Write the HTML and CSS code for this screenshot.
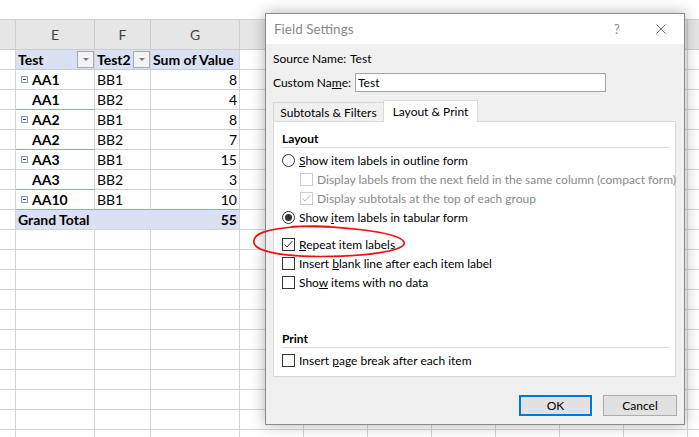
FILE: index.html
```html
<!DOCTYPE html>
<html>
<head>
<meta charset="utf-8">
<title>Field Settings</title>
<link rel="stylesheet" href="styles.css">
</head>
<body>
<div class="sheet">
  <div class="strip"></div>
  <div class="ch"></div><div class="ch">E</div><div class="ch">F</div><div class="ch">G</div><div class="ch rest"></div>

  <div class="c"></div>
  <div class="c ph"><span>Test</span><span class="dd"></span></div>
  <div class="c ph"><span>Test2</span><span class="dd"></span></div>
  <div class="c ph">Sum of Value</div>
  <div class="c rest"></div>

  <div class="c"></div>
  <div class="c e b"><span class="tog"></span>AA1</div>
  <div class="c">BB1</div>
  <div class="c num">8</div>
  <div class="c rest"></div>

  <div class="c"></div>
  <div class="c e ind b bb">AA1</div>
  <div class="c">BB2</div>
  <div class="c num">4</div>
  <div class="c rest"></div>

  <div class="c"></div>
  <div class="c e b"><span class="tog"></span>AA2</div>
  <div class="c">BB1</div>
  <div class="c num">8</div>
  <div class="c rest"></div>

  <div class="c"></div>
  <div class="c e ind b bb">AA2</div>
  <div class="c">BB2</div>
  <div class="c num">7</div>
  <div class="c rest"></div>

  <div class="c"></div>
  <div class="c e b"><span class="tog"></span>AA3</div>
  <div class="c">BB1</div>
  <div class="c num">15</div>
  <div class="c rest"></div>

  <div class="c"></div>
  <div class="c e ind b bb">AA3</div>
  <div class="c">BB2</div>
  <div class="c num">3</div>
  <div class="c rest"></div>

  <div class="c"></div>
  <div class="c e b bb"><span class="tog"></span>AA10</div>
  <div class="c bb">BB1</div>
  <div class="c num bb">10</div>
  <div class="c rest"></div>

  <div class="c"></div>
  <div class="c gt nr">Grand Total</div>
  <div class="c gt nr"></div>
  <div class="c gt num">55</div>
  <div class="c rest"></div>

  <div class="c"></div><div class="c"></div><div class="c"></div><div class="c"></div><div class="c rest"></div>
  <div class="c"></div><div class="c"></div><div class="c"></div><div class="c"></div><div class="c rest"></div>
  <div class="c"></div><div class="c"></div><div class="c"></div><div class="c"></div><div class="c rest"></div>
  <div class="c"></div><div class="c"></div><div class="c"></div><div class="c"></div><div class="c rest"></div>
  <div class="c"></div><div class="c"></div><div class="c"></div><div class="c"></div><div class="c rest"></div>
  <div class="c"></div><div class="c"></div><div class="c"></div><div class="c"></div><div class="c rest"></div>
  <div class="c"></div><div class="c"></div><div class="c"></div><div class="c"></div><div class="c rest"></div>
  <div class="c"></div><div class="c"></div><div class="c"></div><div class="c"></div><div class="c rest"></div>
  <div class="c"></div><div class="c"></div><div class="c"></div><div class="c"></div><div class="c rest"></div>
  <div class="c"></div><div class="c"></div><div class="c"></div><div class="c"></div><div class="c rest"></div>
  <div class="c"></div><div class="c"></div><div class="c"></div><div class="c"></div><div class="c rest"></div>
</div>

<div class="dialog">
  <div class="titlebar">
    <span class="title">Field Settings</span>
    <span class="help">?</span>
    <svg class="close" width="10" height="10" viewBox="0 0 10 10"><path d="M0.5 0.5 L9.5 9.5 M9.5 0.5 L0.5 9.5" stroke="#6b6b6b" stroke-width="1" fill="none"/></svg>
  </div>
  <div class="dbody">
    <div class="src"><span class="lbl1">Source Name:</span><span>Test</span></div>
    <div class="cname"><span class="lbl2">Custom Na<u>m</u>e:</span><div class="tbox">Test</div></div>
    <div class="tabs">
      <div class="tab">Subtotals &amp; Filters</div>
      <div class="tab active">Layout &amp; Print</div>
    </div>
    <div class="panel">
      <div class="sect">Layout</div>
      <div class="opt first"><span class="radio"></span><span><u>S</u>how item labels in outline form</span></div>
      <div class="opt sub dis"><span class="cb"></span><span>Display labels from the next field in the same column (compact form)</span></div>
      <div class="opt sub dis"><span class="cb"><svg width="11" height="11" viewBox="0 0 11 11"><path d="M1.5 5.5 L4 8 L9.5 2" stroke="#b5b5b5" stroke-width="1" fill="none"/></svg></span><span>Display subtotals at the top of each group</span></div>
      <div class="opt"><span class="radio on"></span><span>Show <u>i</u>tem labels in tabular form</span></div>
      <div class="opt gap"><span class="cb"><svg width="11" height="11" viewBox="0 0 11 11"><path d="M1.5 5.5 L4 8 L9.5 2" stroke="#333" stroke-width="1" fill="none"/></svg></span><span><u>R</u>epeat item labels</span></div>
      <div class="opt"><span class="cb"></span><span>Insert <u>b</u>lank line after each item label</span></div>
      <div class="opt"><span class="cb"></span><span>Sho<u>w</u> items with no data</span></div>
      <div class="sect print">Print</div>
      <div class="opt first"><span class="cb"></span><span>Insert <u>p</u>age break after each item</span></div>
    </div>
    <div class="buttons">
      <button class="btn default">OK</button>
      <button class="btn">Cancel</button>
    </div>
  </div>
</div>

<svg class="annot" width="699" height="437" viewBox="0 0 699 437">
  <path d="M292 226.5 C335 225.5 398 231 404 242 C408 251 365 256.5 320 256.5 C285 256.5 256 252 254 243 C252 234 266 228.5 300 226.5 C312 226 322 226 330 226.5" fill="none" stroke="#f01010" stroke-width="1.7" stroke-linecap="round"/>
</svg>
</body>
</html>
```

FILE: styles.css
```css
* { box-sizing: border-box; }
html, body { margin: 0; padding: 0; }
body {
  width: 699px;
  height: 437px;
  overflow: hidden;
  position: relative;
  background: #fff;
  font-family: "Lato", "Liberation Sans", sans-serif;
}

/* ---------- spreadsheet ---------- */
.sheet {
  display: grid;
  grid-template-columns: 16px 79px 56px 89px 1fr;
  grid-template-rows: 20px 30px;
  grid-auto-rows: 20px;
  font-size: 14px;
  color: #000;
}
.strip { grid-column: 1 / -1; border-bottom: 1px solid #d0d0d0; }
.ch {
  background: #e6e6e6;
  border-right: 1px solid #cdcdcd;
  border-bottom: 1px solid #cdcdcd;
  color: #444;
  display: flex;
  align-items: center;
  justify-content: center;
  font-size: 14px;
}
.ch.rest {
  border-right: none;
  background: #e6e6e6 repeating-linear-gradient(to right, transparent 0 63px, #cdcdcd 63px 64px);
}
.c {
  border-right: 1px solid #d4d4d4;
  border-bottom: 1px solid #d4d4d4;
  display: flex;
  align-items: center;
  padding: 0 2px;
  white-space: nowrap;
}
.c.rest {
  border-right: none;
  background: repeating-linear-gradient(to right, transparent 0 63px, #d4d4d4 63px 64px);
}
.ph {
  background: #d9e1f2;
  font-weight: bold;
  justify-content: space-between;
  border-bottom-color: #bfcbe0;
}
.dd {
  width: 17px;
  height: 17px;
  margin-right: -2px;
  border: 1px solid #a9a9a9;
  background: #f3f3f3;
  display: flex;
  align-items: center;
  justify-content: center;
}
.dd::after {
  content: "";
  border-left: 3px solid transparent;
  border-right: 3px solid transparent;
  border-top: 3px solid #7a7a7a;
}
.b { font-weight: bold; }
.e { padding-left: 5px; }
.e.ind { padding-left: 16px; }
.tog {
  width: 7px;
  height: 7px;
  margin-right: 4px;
  border: 1px solid #8496b0;
  background: #fff linear-gradient(#333, #333) no-repeat center / 3px 1px;
}
.num { justify-content: flex-end; }
.bb { border-bottom-color: #8ea9db; }
.gt { background: #d9e1f2; font-weight: bold; }
.gt.nr { border-right-color: #d9e1f2; }

/* ---------- dialog ---------- */
.dialog {
  position: absolute;
  left: 265px;
  top: 13px;
  width: 420px;
  height: 412px;
  border: 1px solid #8a8a8a;
  background: #f0f0f0;
  box-shadow: 0 0 14px rgba(0, 0, 0, 0.3);
  font-family: "Lato", "Liberation Sans", sans-serif;
  font-size: 12px;
  color: #000;
  display: flex;
  flex-direction: column;
  white-space: nowrap;
}
.titlebar {
  height: 30px;
  background: #fff;
  display: flex;
  align-items: center;
  padding: 0 18px 0 8px;
}
.title { flex: 1; color: #8a8a8a; font-size: 13.5px; }
.help { color: #8a8a8a; width: 10px; text-align: center; margin-right: 34px; font-size: 13px; }
.close { display: block; }

.dbody {
  flex: 1;
  padding: 4px 8px 0 7px;
  display: flex;
  flex-direction: column;
}
.src, .cname { height: 20px; display: flex; align-items: center; }
.cname { margin-top: 4px; }
.lbl1 { width: 77px; flex: none; }
.lbl2 { width: 82px; flex: none; }
.tbox {
  width: 251px;
  height: 19px;
  border: 1px solid #a5a5a5;
  background: #fff;
  padding-left: 2px;
  display: flex;
  align-items: center;
}

.tabs {
  margin-top: 8px;
  height: 22px;
  margin-bottom: -1px;
  display: flex;
  align-items: flex-end;
  position: relative;
  z-index: 1;
}
.tab {
  width: 111px;
  height: 19px;
  margin-bottom: 1px;
  border: 1px solid #d9d9d9;
  border-bottom: none;
  display: flex;
  align-items: center;
  justify-content: center;
}
.tab.active {
  width: 95px;
  height: 22px;
  margin-bottom: 0;
  margin-left: -1px;
  background: #fff;
  padding-bottom: 1px;
}
.panel {
  height: 256px;
  background: #fff;
  border: 1px solid #d9d9d9;
  padding: 7px 6px 0 8px;
}
.sect {
  height: 19px;
  border-bottom: 1px solid #dcdcdc;
  font-weight: bold;
  display: flex;
  align-items: center;
}
.sect.print { margin-top: 37px; }
.opt { height: 19px; display: flex; align-items: center; }
.opt.first { margin-top: 3px; }
.opt.gap { margin-top: 8px; }
.opt.sub { padding-left: 18px; }
.opt.dis { color: #8a8a8a; }
.radio, .cb {
  width: 13px;
  height: 13px;
  margin-right: 4px;
  border: 1px solid #333;
  background: #fff;
  flex: none;
  display: flex;
  align-items: center;
  justify-content: center;
}
.radio { border-radius: 50%; }
.radio.on::after {
  content: "";
  width: 7px;
  height: 7px;
  border-radius: 50%;
  background: #333;
}
.dis .cb { border-color: #cccccc; }
.cb svg { display: block; }

.buttons {
  margin-top: 18px;
  margin-right: -1px;
  display: flex;
  justify-content: flex-end;
  gap: 11px;
}
.btn {
  width: 74px;
  height: 21px;
  padding: 0;
  background: #e1e1e1;
  border: 1px solid #adadad;
  font: inherit;
  color: #000;
}
.btn.default { width: 73px; border: 2px solid #0078d7; }

.annot {
  position: absolute;
  left: 0;
  top: 0;
  pointer-events: none;
}
```
